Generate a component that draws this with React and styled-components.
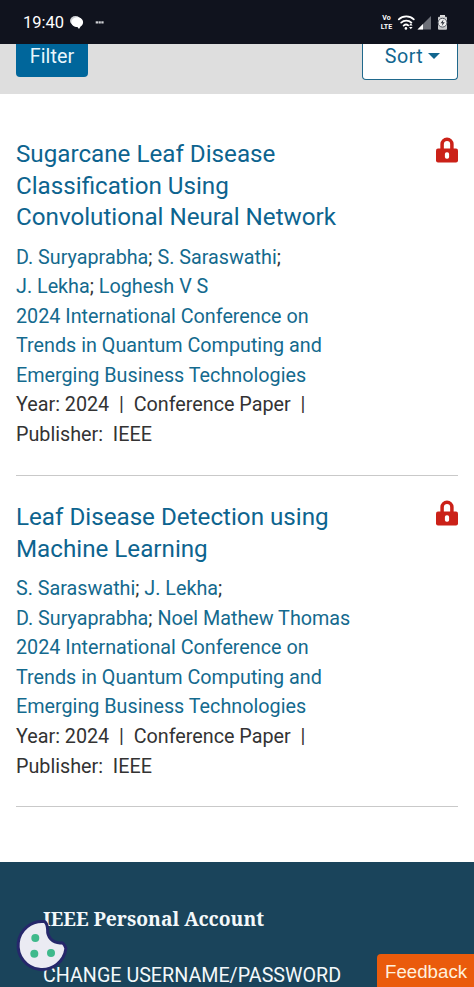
import React from "react";
import styled, { createGlobalStyle } from "styled-components";

const Global = createGlobalStyle`
  * { box-sizing: border-box; }
  html, body { margin: 0; padding: 0; background: #fff; }
  body { overflow: hidden; font-family: Roboto, sans-serif; }
`;

const Screen = styled.div`
  position: relative;
  width: 474px;
  height: 987px;
  overflow: hidden;
  display: flex;
  flex-direction: column;
  background: #fff;
`;

const StatusBar = styled.header`
  height: 44px;
  flex: none;
  display: flex;
  align-items: center;
  justify-content: space-between;
  padding: 1px 25px 0 23px;
  background: #10131e;
  color: #fff;
`;

const StatusGroup = styled.div`
  display: flex;
  align-items: center;
`;

const Clock = styled.span`
  font-size: 16.5px;
  line-height: 20px;
  width: 46px;
  white-space: nowrap;
`;

const Toolbar = styled.div`
  height: 50px;
  flex: none;
  display: flex;
  justify-content: space-between;
  align-items: flex-start;
  padding: 0 16px;
  background: #dedede;
`;

const ToolButton = styled.button`
  display: flex;
  justify-content: center;
  gap: 5px;
  width: ${(p) => (p.$outlined ? 96 : 72)}px;
  height: ${(p) => (p.$outlined ? 36 : 33)}px;
  margin: 0;
  padding: 0 0 0 ${(p) => (p.$outlined ? 5 : 0)}px;
  border: ${(p) => (p.$outlined ? "1.5px solid #20698c" : "0")};
  border-top: 0;
  border-radius: 0 0 4px 4px;
  background: ${(p) => (p.$outlined ? "#fff" : "#00669b")};
  color: ${(p) => (p.$outlined ? "#12668f" : "#e9f6fc")};
  font: 400 19.7px/25px Roboto, sans-serif;
  letter-spacing: ${(p) => (p.$outlined ? 0.5 : 0.1)}px;
`;

const Caret = styled.span`
  width: 0;
  height: 0;
  margin-top: 9px;
  border: 6px solid transparent;
  border-top-color: #12668f;
  border-bottom: 0;
`;

const Results = styled.main`
  flex: none;
  height: 768px;
  padding: 19px 16px 0;
`;

const Entry = styled.article`
  display: flex;
  justify-content: space-between;
  align-items: flex-start;
  height: ${(p) => p.$height}px;
  padding-top: 26px;
  border-bottom: 1px solid #c9c9c9;
`;

const Title = styled.h2`
  margin: 0 0 9px;
  font-size: 24.2px;
  line-height: 31.5px;
  font-weight: 400;
  color: #0d648f;
  white-space: nowrap;
`;

const Line = styled.div`
  font-size: 19.75px;
  line-height: 29.6px;
  color: #333;
  white-space: pre;
`;

const Link = styled.span`
  color: #146a8e;
`;

const LockIcon = styled.svg`
  flex: none;
  width: 22px;
  height: 26px;
  margin-top: -2px;
`;

const Footer = styled.footer`
  flex: 1;
  padding: 44px 0 0 43px;
  background: #1a445b;
  color: #f3f8fa;
  white-space: nowrap;
`;

const FooterHeading = styled.h3`
  margin: 0;
  font: 700 19.3px/26px "Noto Serif", "Liberation Serif", serif;
`;

const FooterLink = styled.div`
  margin-top: 31px;
  font-size: 19.7px;
  line-height: 26px;
`;

const CookieButton = styled.svg`
  position: absolute;
  left: 14px;
  top: 917px;
  width: 56px;
  height: 56px;
`;

const Feedback = styled.div`
  position: absolute;
  right: 0;
  bottom: 0;
  width: 97px;
  height: 33px;
  padding-left: 8px;
  border-radius: 4px 0 0 0;
  background: #ea5b0c;
  color: #fff0dd;
  font: 400 18.7px/35px "Liberation Sans", sans-serif;
  white-space: nowrap;
`;

const Lock = () => (
  <LockIcon viewBox="0 0 22 26">
    <path d="M6.1 13V7.1a4.9 4.9 0 0 1 9.8 0V13" fill="none" stroke="#cb2118" strokeWidth="3.5" />
    <rect y="11.5" width="22" height="14" rx="2" fill="#cb2118" />
    <rect x="8.9" y="15.2" width="4.2" height="6.6" rx="1.8" fill="#fff" />
  </LockIcon>
);

const venue = [
  "2024 International Conference on",
  "Trends in Quantum Computing and",
  "Emerging Business Technologies",
];

const papers = [
  {
    height: 363,
    title: ["Sugarcane Leaf Disease", "Classification Using", "Convolutional Neural Network"],
    authors: [["D. Suryaprabha", "S. Saraswathi"], ["J. Lekha", "Loghesh V S"]],
  },
  {
    height: 331,
    title: ["Leaf Disease Detection using", "Machine Learning"],
    authors: [["S. Saraswathi", "J. Lekha"], ["D. Suryaprabha", "Noel Mathew Thomas"]],
  },
];

const Paper = ({ paper }) => (
  <Entry $height={paper.height}>
    <div>
      <Title>
        {paper.title.map((t) => (
          <div key={t}>{t}</div>
        ))}
      </Title>
      {paper.authors.map(([a, b], i) => (
        <Line key={a}>
          <Link>{a}</Link>; <Link>{b}</Link>
          {i === 0 ? ";" : ""}
        </Line>
      ))}
      {venue.map((v) => (
        <Line key={v}>
          <Link>{v}</Link>
        </Line>
      ))}
      <Line>{"Year: 2024  |  Conference Paper  |"}</Line>
      <Line>{"Publisher:  IEEE"}</Line>
    </div>
    <Lock />
  </Entry>
);

const StatusLeftIcons = () => (
  <svg width="40" height="20" viewBox="0 0 40 20">
    <ellipse cx="6.5" cy="7.8" rx="5.5" ry="4.7" fill="#cfd1d5" />
    <path d="M8.3 4.2c3.3 0 5.8 2.2 5.8 5 0 1.8-1 3.3-2.5 4.2L10 16l-1.6-2c-3.4 0-6-2.1-6-4.8 0-2.8 2.6-5 5.9-5Z" fill="#fff" />
    <g fill="#cfd1d5">
      <rect x="26.7" y="8.3" width="2.3" height="2.2" />
      <rect x="29.5" y="8.3" width="2.3" height="2.2" />
      <rect x="32.3" y="8.3" width="2.3" height="2.2" />
    </g>
  </svg>
);

const VoLte = styled.div`
  width: 15px;
  margin-right: 3px;
  font: 700 7.6px/8px Roboto, sans-serif;
  text-align: center;
  transform: scaleX(0.92);

  div + div {
    margin-top: 0.5px;
  }
`;

const StatusRightIcons = () => (
  <svg width="52" height="20" viewBox="0 0 52 20">
    <g fill="none" stroke="#fff" strokeWidth="1.8" strokeLinecap="round">
      <path d="M1.8 6.4c4-4 11-4 15 0" />
      <path d="M4.2 9.6c2.8-2.6 7.4-2.6 10.2 0" />
      <path d="M6.6 12.6c1.5-1.3 3.4-1.3 4.6-.2" />
    </g>
    <circle cx="8.9" cy="15.4" r="1.3" fill="#fff" />
    <path d="m12 12.5 1.8-2.2 1.8 2.2Zm0 1.5h3.6l-1.8 2.2Z" fill="#fff" />
    <path d="M20.5 16.5 34 3V16.5Z" fill="#6d7078" />
    <path d="M20.5 16.5 26 11V16.5Z" fill="#fff" />
    <rect x="43" y="2" width="5" height="2" fill="#ddd" />
    <rect x="41" y="3.7" width="9" height="13" rx="1" fill="#c9cacc" />
    <circle cx="45.5" cy="9.7" r="4.4" fill="#eee" stroke="#555963" strokeWidth="1" />
    <path d="m46.5 6.5-3 3.8h2l-.7 2.8 3-3.9h-2Z" fill="#30343e" />
  </svg>
);

export default function App() {
  return (
    <>
      <Global />
      <Screen>
        <StatusBar>
          <StatusGroup>
            <Clock>19:40</Clock>
            <StatusLeftIcons />
          </StatusGroup>
          <StatusGroup>
            <VoLte>
              <div>Vo</div>
              <div>LTE</div>
            </VoLte>
            <StatusRightIcons />
          </StatusGroup>
        </StatusBar>
        <Toolbar>
          <ToolButton>Filter</ToolButton>
          <ToolButton $outlined>
            Sort
            <Caret />
          </ToolButton>
        </Toolbar>
        <Results>
          {papers.map((p) => (
            <Paper key={p.title[0]} paper={p} />
          ))}
        </Results>
        <Footer>
          <FooterHeading>IEEE Personal Account</FooterHeading>
          <FooterLink>CHANGE USERNAME/PASSWORD</FooterLink>
        </Footer>
        <CookieButton viewBox="0 0 56 56">
          <path
            d="M30.5 4.6A24 24 0 1 0 51.9 31.5C51 28.5 50 26.5 48 25.8 43 26.3 39.5 25 37 22.3 34.4 19.5 33.4 16.5 33.6 12.5 33.4 9 33 6 30.5 4.6Z"
            fill="#ebebf3"
            stroke="#25276b"
            strokeWidth="3"
            strokeLinejoin="round"
          />
          <g fill="#3fb98c">
            <circle cx="21.3" cy="21" r="4" />
            <circle cx="20.3" cy="36.7" r="4" />
            <circle cx="37" cy="36" r="4" />
          </g>
        </CookieButton>
        <Feedback>Feedback</Feedback>
      </Screen>
    </>
  );
}
